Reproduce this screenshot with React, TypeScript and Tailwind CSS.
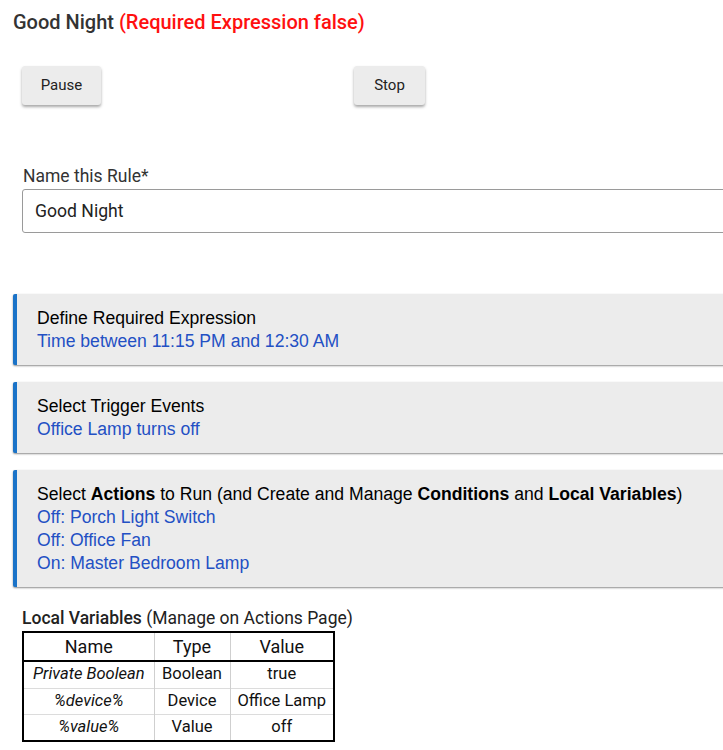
import React from "react";

const font = { fontFamily: "Roboto, 'Noto Sans', sans-serif" };
const arial = { fontFamily: "'Liberation Sans', Arial, sans-serif" };

function Card({ children }: { children: React.ReactNode }) {
  return (
    <div
      className="w-[760px] bg-[#ececec] border-l-4 border-[#1a73c8] rounded-l-[2px] pl-[20px] pt-[13px] pb-[12px] shadow-[0_1px_2px_rgba(0,0,0,0.45)] text-[17.6px] leading-[23px] text-black"
      style={arial}
    >
      {children}
    </div>
  );
}

function Link({ children }: { children: React.ReactNode }) {
  return <div className="text-[#2350c4]">{children}</div>;
}

export default function App() {
  return (
    <div className="w-full h-[750px] overflow-hidden bg-white" style={font}>
      <div className="pl-[13px] pt-[9px]">
        <div className="text-[20px] leading-[26px] font-medium text-[#333]">
          Good Night <span className="text-[#ff1010]">(Required Expression false)</span>
        </div>
        <div className="grid grid-cols-[332px_332px] pl-[9px] mt-[31px]">
          <div>
            <button className="h-[39px] w-[79px] bg-[#ececec] rounded-[3px] text-[15px] text-[#222] shadow-[0_2px_3px_rgba(0,0,0,0.35)]">
              Pause
            </button>
          </div>
          <div>
            <button className="h-[39px] w-[71px] bg-[#ececec] rounded-[3px] text-[15px] text-[#222] shadow-[0_2px_3px_rgba(0,0,0,0.35)]">
              Stop
            </button>
          </div>
        </div>
        <div className="pl-[10px] mt-[60px] text-[17.5px] leading-[22px] text-[#333]">Name this Rule*</div>
        <div className="ml-[9px] mt-[2px] w-[760px] h-[44px] border border-[#9a9a9a] rounded-[3px] flex items-center pl-[12px] text-[17.6px] text-[#222]">
          Good Night
        </div>
        <div className="mt-[61px] flex flex-col gap-[17px]">
          <Card>
            <div>Define Required Expression</div>
            <Link>Time between 11:15 PM and 12:30 AM</Link>
          </Card>
          <Card>
            <div>Select Trigger Events</div>
            <Link>Office Lamp turns off</Link>
          </Card>
          <Card>
            <div>
              Select <b className="font-bold">Actions</b> to Run (and Create and Manage{" "}
              <b className="font-bold">Conditions</b> and <b className="font-bold">Local Variables</b>)
            </div>
            <Link>Off: Porch Light Switch</Link>
            <Link>Off: Office Fan</Link>
            <Link>On: Master Bedroom Lamp</Link>
          </Card>
        </div>
        <div className="pl-[9px] mt-[20px] text-[17.5px] leading-[22px] text-[#222]">
          <span className="font-medium">Local Variables</span> (Manage on Actions Page)
        </div>
        <table className="ml-[9px] mt-[2px] border-2 border-black border-collapse text-[16.5px] text-[#111]">
          <thead>
            <tr className="border-b-2 border-black">
              <th className="w-[131px] h-[29px] font-normal text-[18px] border-r border-[#cfcfcf]">Name</th>
              <th className="w-[76px] font-normal text-[18px] border-r border-[#cfcfcf]">Type</th>
              <th className="w-[104px] font-normal text-[18px]">Value</th>
            </tr>
          </thead>
          <tbody>
            <tr className="border-b border-[#dcdcdc] h-[27px]">
              <td className="text-center italic border-r border-[#cfcfcf]">Private Boolean</td>
              <td className="text-center border-r border-[#cfcfcf]">Boolean</td>
              <td className="text-center">true</td>
            </tr>
            <tr className="border-b border-[#dcdcdc] h-[26px]">
              <td className="text-center italic border-r border-[#cfcfcf]">%device%</td>
              <td className="text-center border-r border-[#cfcfcf]">Device</td>
              <td className="text-center">Office Lamp</td>
            </tr>
            <tr className="h-[27px]">
              <td className="text-center italic border-r border-[#cfcfcf]">%value%</td>
              <td className="text-center border-r border-[#cfcfcf]">Value</td>
              <td className="text-center">off</td>
            </tr>
          </tbody>
        </table>
      </div>
    </div>
  );
}
